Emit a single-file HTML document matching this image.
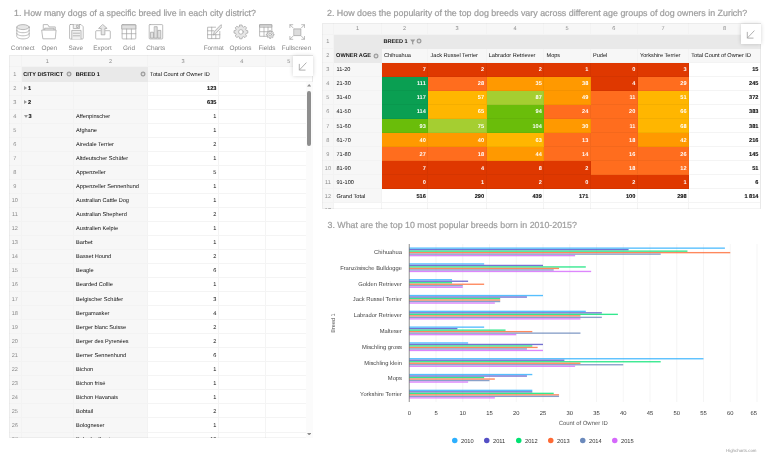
<!DOCTYPE html>
<html><head><meta charset="utf-8"><title>Dashboard</title>
<style>
html,body{margin:0;padding:0;background:#fff;}
body{filter:blur(0.3px);text-rendering:geometricPrecision;width:768px;height:456px;position:relative;overflow:hidden;font-family:"Liberation Sans",sans-serif;color:#111;}
.abs{position:absolute;}
.title{position:absolute;font-size:8.86px;color:#9e9e9e;-webkit-text-stroke:0.22px #9e9e9e;white-space:nowrap;line-height:10px;}
.tb{position:absolute;font-size:6.4px;color:#848484;white-space:nowrap;text-align:center;width:40px;line-height:8px;}
.grid{position:absolute;overflow:hidden;background:#fff;}
.grid:after{content:'';position:absolute;left:0;top:0;right:0;bottom:0;border:1px solid rgba(0,0,0,0.045);box-sizing:border-box;pointer-events:none;}
.c{position:absolute;box-sizing:border-box;font-size:5.6px;line-height:14.2px;height:14px;white-space:nowrap;overflow:hidden;border-right:0.5px solid #f4f4f4;border-bottom:0.5px solid #f4f4f4;padding:0.4px 2.1px 0 2.1px;color:#111;}
.h{background:#f7f7f7;color:#8c8c8c;text-align:center;border-color:#f3f3f3;}
.rn{background:#f7f7f7;color:#8c8c8c;text-align:center;padding:0.4px 0 0 0;border-color:#f3f3f3;}
.m{background:#f7f7f7;border-color:#f3f3f3;}
.hd{background:#e9e9e9;font-weight:bold;border-color:#e9e9e9;padding-left:1.7px;}
.r{text-align:right;padding-right:1.6px;}
.g2 .c{padding-top:0.55px;}
.b,.c b{font-weight:bold;-webkit-text-stroke:0.12px #111;}
.w{color:#fff;font-weight:bold;text-align:right;border-color:rgba(0,0,0,0.045);padding-right:1.600px;}
.btn{position:absolute;width:20px;height:20px;background:#fff;box-shadow:0 0 4px rgba(0,0,0,0.18);}
</style></head><body>

<div class="title" style="left:14px;top:7.5px;font-size:8.82px;">1. How many dogs of a specific breed live in each city district?</div>
<div class="title" style="left:327px;top:7.5px;font-size:8.88px;">2. How does the popularity of the top dog breeds vary across different age groups of dog owners in Zurich?</div>
<div class="title" style="left:327.5px;top:219.6px;font-size:8.83px;">3. What are the top 10 most popular breeds born in 2010-2015?</div>
<div class="tb" style="left:2.75px;top:44.9px;">Connect</div>
<div class="tb" style="left:29.25px;top:44.9px;">Open</div>
<div class="tb" style="left:55.75px;top:44.9px;">Save</div>
<div class="tb" style="left:82.5px;top:44.9px;">Export</div>
<div class="tb" style="left:109px;top:44.9px;">Grid</div>
<div class="tb" style="left:135.75px;top:44.9px;">Charts</div>
<div class="tb" style="left:193.75px;top:44.9px;">Format</div>
<div class="tb" style="left:220.5px;top:44.9px;">Options</div>
<div class="tb" style="left:247px;top:44.9px;">Fields</div>
<div class="tb" style="left:276.5px;top:44.9px;">Fullscreen</div>
<svg class="abs" style="left:14.75px;top:23.8px;" width="16" height="16" viewBox="0 0 16 16"><g fill="none" stroke="#a0a0a0" stroke-width="0.7" stroke-linejoin="round" stroke-linecap="round"><path d="M1.800 3.100v9.400c0 1.300 2.800 2.400 6.200 2.400s6.200-1.100 6.200-2.400V3.100"/><ellipse cx="8" cy="3.100" rx="6.200" ry="2.500" fill="#e6e6e6"/><path d="M1.800 6.300c0 1.300 2.800 2.400 6.200 2.400s6.200-1.100 6.200-2.400"/><path d="M1.800 9.400c0 1.300 2.800 2.400 6.200 2.400s6.200-1.100 6.200-2.400"/></g></svg>
<svg class="abs" style="left:41.25px;top:23.8px;" width="16" height="16" viewBox="0 0 16 16"><g fill="none" stroke="#a0a0a0" stroke-width="0.7" stroke-linejoin="round" stroke-linecap="round"><path d="M2.250 6.100V0.600h4.500l1.300 2.300h6.200v3.200"/><path d="M3.650 6V4.200h9.400V6" fill="#e6e6e6"/><path d="M1.050 6.100H15.100L14.250 14.800H2.250z" fill="#fff"/></g></svg>
<svg class="abs" style="left:67.75px;top:23.8px;" width="16" height="16" viewBox="0 0 16 16"><g fill="none" stroke="#a0a0a0" stroke-width="0.7" stroke-linejoin="round" stroke-linecap="round" transform="translate(0.4 0)"><path d="M2 0.500h10.600l2.200 2.200v11.500a.8.800 0 0 1-.8.800H2a.8.800 0 0 1-.8-.8V1.300a.8.800 0 0 1 .8-.8z"/><path d="M4.850 0.500v4h6.300v-4" fill="#f0f0f0"/><path d="M8.600 1.200h1.300v2.300H8.600z"/><path d="M3.350 14.950V6.400h9.300v8.550" fill="#f0f0f0"/><path d="M4.800 9.200h6.400M4.800 11.800h6.400"/></g></svg>
<svg class="abs" style="left:94.5px;top:23.8px;" width="16" height="16" viewBox="0 0 16 16"><g fill="none" stroke="#a0a0a0" stroke-width="0.7" stroke-linejoin="round" stroke-linecap="round"><path d="M5.400 6.700H1.500a.8.800 0 0 0-.8.800v6.700a.8.800 0 0 0 .8.800h13a.8.800 0 0 0 .8-.8V7.500a.8.800 0 0 0-.8-.8h-3.900"/><path d="M8 0.700l4.100 3.700H9.900v6.400H6.200V4.400H4z" fill="#e6e6e6"/></g></svg>
<svg class="abs" style="left:121px;top:23.8px;" width="16" height="16" viewBox="0 0 16 16"><g fill="none" stroke="#a0a0a0" stroke-width="0.7" stroke-linejoin="round" stroke-linecap="round"><rect x="1.100" y="0.600" width="13.700" height="14.350" rx="0.800"/><path d="M1.100 0.900h13.700v4.150H1.100z" fill="#e0e0e0"/><path d="M1.100 9.700h13.700M5.600 5.050v9.900M10.400 5.050v9.900"/></g></svg>
<svg class="abs" style="left:147.75px;top:23.8px;" width="16" height="16" viewBox="0 0 16 16"><g fill="none" stroke="#a0a0a0" stroke-width="0.7" stroke-linejoin="round" stroke-linecap="round"><rect x="1.200" y="0.600" width="13.500" height="14.350" rx="0.800"/><rect x="2.900" y="8.200" width="2.600" height="5.900" fill="#e0e0e0"/><rect x="6.600" y="2.700" width="2.600" height="11.400" fill="#e0e0e0"/><rect x="10.200" y="6.400" width="2.600" height="7.700" fill="#e0e0e0"/></g></svg>
<svg class="abs" style="left:205.75px;top:23.8px;" width="16" height="16" viewBox="0 0 16 16"><g fill="none" stroke="#a0a0a0" stroke-width="0.7" stroke-linejoin="round" stroke-linecap="round"><path d="M9.600 3.200H1.600v11.400h12.200V7.400"/><path d="M1.600 6.800h6.200M1.600 10.700h12.200M5.700 3.200v11.400M9.800 10.700v3.900"/><path d="M7.500 10.700l.7-3 6.200-6.500a1.100 1.100 0 0 1 1.600 1.500l-6.100 6.600z" fill="#e6e6e6"/></g></svg>
<svg class="abs" style="left:232.5px;top:23.8px;" width="16" height="16" viewBox="0 0 16 16"><g fill="none" stroke="#a0a0a0" stroke-width="0.7" stroke-linejoin="round" stroke-linecap="round"><path d="M6.71 1.00L9.09 1.00L9.32 2.59L10.65 3.14L11.94 2.18L13.62 3.86L12.66 5.15L13.21 6.48L14.80 6.71L14.80 9.09L13.21 9.32L12.66 10.65L13.62 11.94L11.94 13.62L10.65 12.66L9.32 13.21L9.09 14.80L6.71 14.80L6.48 13.21L5.15 12.66L3.86 13.62L2.18 11.94L3.14 10.65L2.59 9.32L1.00 9.09L1.00 6.71L2.59 6.48L3.14 5.15L2.18 3.86L3.86 2.18L5.15 3.14L6.48 2.59z" fill="#e6e6e6"/><circle cx="7.900" cy="7.900" r="2.300" fill="#fff"/></g></svg>
<svg class="abs" style="left:259px;top:23.8px;" width="16" height="16" viewBox="0 0 16 16"><g fill="none" stroke="#a0a0a0" stroke-width="0.7" stroke-linejoin="round" stroke-linecap="round"><path d="M1 0.600h11.800v11.700H1z"/><path d="M1 0.900h11.800v2.300H1z" fill="#e0e0e0"/><path d="M1 7.700h11.800M5 3.200v9.100M9 3.200v9.100"/><path d="M10.63 6.74L11.77 6.74L11.85 7.77L12.74 8.14L13.52 7.47L14.33 8.28L13.66 9.06L14.03 9.95L15.06 10.03L15.06 11.17L14.03 11.25L13.66 12.14L14.33 12.92L13.52 13.73L12.74 13.06L11.85 13.43L11.77 14.46L10.63 14.46L10.55 13.43L9.66 13.06L8.88 13.73L8.07 12.92L8.74 12.14L8.37 11.25L7.34 11.17L7.34 10.03L8.37 9.95L8.74 9.06L8.07 8.28L8.88 7.47L9.66 8.14L10.55 7.77z" fill="#e6e6e6"/><circle cx="11.200" cy="10.600" r="1.250" fill="#fff"/></g></svg>
<svg class="abs" style="left:288.5px;top:23.8px;" width="16" height="16" viewBox="0 0 16 16"><g fill="none" stroke="#a0a0a0" stroke-width="0.7" stroke-linejoin="round" stroke-linecap="round"><rect x="5.150" y="4.900" width="6.700" height="6.700" fill="#dcdcdc"/><path d="M1 0.800l3.200 3.200M15.500 0.800l-3.200 3.200M1 15.200l3.200-3.200M15.500 15.200l-3.200-3.200"/><path d="M0.900 3.600V0.700h2.900M12.700 0.700h2.900v2.900M0.900 12.400v2.900h2.900M12.700 15.300h2.900v-2.900"/></g></svg>
<div class="grid" style="left:9.25px;top:55.3px;width:303.75px;height:383.2px;">
<div class="c rn" style="left:0.00px;top:0.00px;width:12.25px;height:12.20px;line-height:12.40px;"></div>
<div class="c h" style="left:12.25px;top:0.00px;width:52.50px;height:12.20px;line-height:12.40px;">1</div>
<div class="c h" style="left:64.75px;top:0.00px;width:74.00px;height:12.20px;line-height:12.40px;">2</div>
<div class="c h" style="left:138.75px;top:0.00px;width:71.00px;height:12.20px;line-height:12.40px;">3</div>
<div class="c h" style="left:209.75px;top:0.00px;width:46.50px;height:12.20px;line-height:12.40px;">4</div>
<div class="c h" style="left:256.25px;top:0.00px;width:47.50px;height:12.20px;line-height:12.40px;">5</div>
<div class="c rn" style="left:0.00px;top:12.20px;width:12.25px;height:14.04px;line-height:14.24px;">1</div>
<div class="c hd" style="left:12.25px;top:12.20px;width:52.50px;height:14.04px;line-height:14.24px;"><span>CITY DISTRICT</span><span style="position:absolute;right:0.700px;top:0.500px"><svg width="6.100" height="6.100" viewBox="0 0 16 16" style="vertical-align:-1px"><path d="M6.73 0.91L9.27 0.91L9.39 2.99L10.56 3.47L12.12 2.09L13.91 3.88L12.53 5.44L13.01 6.61L15.09 6.73L15.09 9.27L13.01 9.39L12.53 10.56L13.91 12.12L12.12 13.91L10.56 12.53L9.39 13.01L9.27 15.09L6.73 15.09L6.61 13.01L5.44 12.53L3.88 13.91L2.09 12.12L3.47 10.56L2.99 9.39L0.91 9.27L0.91 6.73L2.99 6.61L3.47 5.44L2.09 3.88L3.88 2.09L5.44 3.47L6.61 2.99zM8 5.100a2.900 2.900 0 1 0 0.010 0z" fill="#9c9c9c" fill-rule="evenodd"/></svg></span></div>
<div class="c hd" style="left:64.75px;top:12.20px;width:74.00px;height:14.04px;line-height:14.24px;"><span>BREED 1</span><span style="position:absolute;right:0.700px;top:0.500px"><svg width="6.100" height="6.100" viewBox="0 0 16 16" style="vertical-align:-1px"><path d="M6.73 0.91L9.27 0.91L9.39 2.99L10.56 3.47L12.12 2.09L13.91 3.88L12.53 5.44L13.01 6.61L15.09 6.73L15.09 9.27L13.01 9.39L12.53 10.56L13.91 12.12L12.12 13.91L10.56 12.53L9.39 13.01L9.27 15.09L6.73 15.09L6.61 13.01L5.44 12.53L3.88 13.91L2.09 12.12L3.47 10.56L2.99 9.39L0.91 9.27L0.91 6.73L2.99 6.61L3.47 5.44L2.09 3.88L3.88 2.09L5.44 3.47L6.61 2.99zM8 5.100a2.900 2.900 0 1 0 0.010 0z" fill="#9c9c9c" fill-rule="evenodd"/></svg></span></div>
<div class="c m" style="left:138.75px;top:12.20px;width:71.00px;height:14.04px;line-height:14.24px;background:#f7f7f7;">Total Count of Owner ID</div>
<div class="c " style="left:209.75px;top:12.20px;width:46.50px;height:14.04px;line-height:14.24px;"></div>
<div class="c " style="left:256.25px;top:12.20px;width:47.50px;height:14.04px;line-height:14.24px;"></div>
<div class="c rn" style="left:0.00px;top:26.24px;width:12.25px;height:14.04px;line-height:14.24px;">2</div>
<div class="c m" style="left:12.25px;top:26.24px;width:52.50px;height:14.04px;line-height:14.24px;"><svg width="3" height="4" viewBox="0 0 3 4" style="vertical-align:0px;margin-right:1.5px"><path d="M0 0l3 2-3 2z" fill="#999"/></svg><b>1</b></div>
<div class="c m" style="left:64.75px;top:26.24px;width:74.00px;height:14.04px;line-height:14.24px;"></div>
<div class="c r" style="left:138.75px;top:26.24px;width:71.00px;height:14.04px;line-height:14.24px;"><b>123</b></div>
<div class="c " style="left:209.75px;top:26.24px;width:46.50px;height:14.04px;line-height:14.24px;"></div>
<div class="c " style="left:256.25px;top:26.24px;width:47.50px;height:14.04px;line-height:14.24px;"></div>
<div class="c rn" style="left:0.00px;top:40.28px;width:12.25px;height:14.04px;line-height:14.24px;">3</div>
<div class="c m" style="left:12.25px;top:40.28px;width:52.50px;height:14.04px;line-height:14.24px;"><svg width="3" height="4" viewBox="0 0 3 4" style="vertical-align:0px;margin-right:1.5px"><path d="M0 0l3 2-3 2z" fill="#999"/></svg><b>2</b></div>
<div class="c m" style="left:64.75px;top:40.28px;width:74.00px;height:14.04px;line-height:14.24px;"></div>
<div class="c r" style="left:138.75px;top:40.28px;width:71.00px;height:14.04px;line-height:14.24px;"><b>635</b></div>
<div class="c " style="left:209.75px;top:40.28px;width:46.50px;height:14.04px;line-height:14.24px;"></div>
<div class="c " style="left:256.25px;top:40.28px;width:47.50px;height:14.04px;line-height:14.24px;"></div>
<div class="c rn" style="left:0.00px;top:54.32px;width:12.25px;height:14.04px;line-height:14.24px;">4</div>
<div class="c m" style="left:12.25px;top:54.32px;width:52.50px;height:14.04px;line-height:14.24px;"><svg width="4" height="3" viewBox="0 0 4 3" style="vertical-align:0.5px;margin-right:1px"><path d="M0 0h4l-2 3z" fill="#999"/></svg><b>3</b></div>
<div class="c m" style="left:64.75px;top:54.32px;width:74.00px;height:14.04px;line-height:14.24px;">Affenpinscher</div>
<div class="c r" style="left:138.75px;top:54.32px;width:71.00px;height:14.04px;line-height:14.24px;">1</div>
<div class="c " style="left:209.75px;top:54.32px;width:46.50px;height:14.04px;line-height:14.24px;"></div>
<div class="c " style="left:256.25px;top:54.32px;width:47.50px;height:14.04px;line-height:14.24px;"></div>
<div class="c rn" style="left:0.00px;top:68.36px;width:12.25px;height:14.04px;line-height:14.24px;">5</div>
<div class="c m" style="left:12.25px;top:68.36px;width:52.50px;height:14.04px;line-height:14.24px;"></div>
<div class="c m" style="left:64.75px;top:68.36px;width:74.00px;height:14.04px;line-height:14.24px;">Afghane</div>
<div class="c r" style="left:138.75px;top:68.36px;width:71.00px;height:14.04px;line-height:14.24px;">1</div>
<div class="c " style="left:209.75px;top:68.36px;width:46.50px;height:14.04px;line-height:14.24px;"></div>
<div class="c " style="left:256.25px;top:68.36px;width:47.50px;height:14.04px;line-height:14.24px;"></div>
<div class="c rn" style="left:0.00px;top:82.40px;width:12.25px;height:14.04px;line-height:14.24px;">6</div>
<div class="c m" style="left:12.25px;top:82.40px;width:52.50px;height:14.04px;line-height:14.24px;"></div>
<div class="c m" style="left:64.75px;top:82.40px;width:74.00px;height:14.04px;line-height:14.24px;">Airedale Terrier</div>
<div class="c r" style="left:138.75px;top:82.40px;width:71.00px;height:14.04px;line-height:14.24px;">2</div>
<div class="c " style="left:209.75px;top:82.40px;width:46.50px;height:14.04px;line-height:14.24px;"></div>
<div class="c " style="left:256.25px;top:82.40px;width:47.50px;height:14.04px;line-height:14.24px;"></div>
<div class="c rn" style="left:0.00px;top:96.44px;width:12.25px;height:14.04px;line-height:14.24px;">7</div>
<div class="c m" style="left:12.25px;top:96.44px;width:52.50px;height:14.04px;line-height:14.24px;"></div>
<div class="c m" style="left:64.75px;top:96.44px;width:74.00px;height:14.04px;line-height:14.24px;">Altdeutscher Schäfer</div>
<div class="c r" style="left:138.75px;top:96.44px;width:71.00px;height:14.04px;line-height:14.24px;">1</div>
<div class="c " style="left:209.75px;top:96.44px;width:46.50px;height:14.04px;line-height:14.24px;"></div>
<div class="c " style="left:256.25px;top:96.44px;width:47.50px;height:14.04px;line-height:14.24px;"></div>
<div class="c rn" style="left:0.00px;top:110.48px;width:12.25px;height:14.04px;line-height:14.24px;">8</div>
<div class="c m" style="left:12.25px;top:110.48px;width:52.50px;height:14.04px;line-height:14.24px;"></div>
<div class="c m" style="left:64.75px;top:110.48px;width:74.00px;height:14.04px;line-height:14.24px;">Appenzeller</div>
<div class="c r" style="left:138.75px;top:110.48px;width:71.00px;height:14.04px;line-height:14.24px;">5</div>
<div class="c " style="left:209.75px;top:110.48px;width:46.50px;height:14.04px;line-height:14.24px;"></div>
<div class="c " style="left:256.25px;top:110.48px;width:47.50px;height:14.04px;line-height:14.24px;"></div>
<div class="c rn" style="left:0.00px;top:124.52px;width:12.25px;height:14.04px;line-height:14.24px;">9</div>
<div class="c m" style="left:12.25px;top:124.52px;width:52.50px;height:14.04px;line-height:14.24px;"></div>
<div class="c m" style="left:64.75px;top:124.52px;width:74.00px;height:14.04px;line-height:14.24px;">Appenzeller Sennenhund</div>
<div class="c r" style="left:138.75px;top:124.52px;width:71.00px;height:14.04px;line-height:14.24px;">1</div>
<div class="c " style="left:209.75px;top:124.52px;width:46.50px;height:14.04px;line-height:14.24px;"></div>
<div class="c " style="left:256.25px;top:124.52px;width:47.50px;height:14.04px;line-height:14.24px;"></div>
<div class="c rn" style="left:0.00px;top:138.56px;width:12.25px;height:14.04px;line-height:14.24px;">10</div>
<div class="c m" style="left:12.25px;top:138.56px;width:52.50px;height:14.04px;line-height:14.24px;"></div>
<div class="c m" style="left:64.75px;top:138.56px;width:74.00px;height:14.04px;line-height:14.24px;">Australian Cattle Dog</div>
<div class="c r" style="left:138.75px;top:138.56px;width:71.00px;height:14.04px;line-height:14.24px;">1</div>
<div class="c " style="left:209.75px;top:138.56px;width:46.50px;height:14.04px;line-height:14.24px;"></div>
<div class="c " style="left:256.25px;top:138.56px;width:47.50px;height:14.04px;line-height:14.24px;"></div>
<div class="c rn" style="left:0.00px;top:152.60px;width:12.25px;height:14.04px;line-height:14.24px;">11</div>
<div class="c m" style="left:12.25px;top:152.60px;width:52.50px;height:14.04px;line-height:14.24px;"></div>
<div class="c m" style="left:64.75px;top:152.60px;width:74.00px;height:14.04px;line-height:14.24px;">Australian Shepherd</div>
<div class="c r" style="left:138.75px;top:152.60px;width:71.00px;height:14.04px;line-height:14.24px;">2</div>
<div class="c " style="left:209.75px;top:152.60px;width:46.50px;height:14.04px;line-height:14.24px;"></div>
<div class="c " style="left:256.25px;top:152.60px;width:47.50px;height:14.04px;line-height:14.24px;"></div>
<div class="c rn" style="left:0.00px;top:166.64px;width:12.25px;height:14.04px;line-height:14.24px;">12</div>
<div class="c m" style="left:12.25px;top:166.64px;width:52.50px;height:14.04px;line-height:14.24px;"></div>
<div class="c m" style="left:64.75px;top:166.64px;width:74.00px;height:14.04px;line-height:14.24px;">Australien Kelpie</div>
<div class="c r" style="left:138.75px;top:166.64px;width:71.00px;height:14.04px;line-height:14.24px;">1</div>
<div class="c " style="left:209.75px;top:166.64px;width:46.50px;height:14.04px;line-height:14.24px;"></div>
<div class="c " style="left:256.25px;top:166.64px;width:47.50px;height:14.04px;line-height:14.24px;"></div>
<div class="c rn" style="left:0.00px;top:180.68px;width:12.25px;height:14.04px;line-height:14.24px;">13</div>
<div class="c m" style="left:12.25px;top:180.68px;width:52.50px;height:14.04px;line-height:14.24px;"></div>
<div class="c m" style="left:64.75px;top:180.68px;width:74.00px;height:14.04px;line-height:14.24px;">Barbet</div>
<div class="c r" style="left:138.75px;top:180.68px;width:71.00px;height:14.04px;line-height:14.24px;">1</div>
<div class="c " style="left:209.75px;top:180.68px;width:46.50px;height:14.04px;line-height:14.24px;"></div>
<div class="c " style="left:256.25px;top:180.68px;width:47.50px;height:14.04px;line-height:14.24px;"></div>
<div class="c rn" style="left:0.00px;top:194.72px;width:12.25px;height:14.04px;line-height:14.24px;">14</div>
<div class="c m" style="left:12.25px;top:194.72px;width:52.50px;height:14.04px;line-height:14.24px;"></div>
<div class="c m" style="left:64.75px;top:194.72px;width:74.00px;height:14.04px;line-height:14.24px;">Basset Hound</div>
<div class="c r" style="left:138.75px;top:194.72px;width:71.00px;height:14.04px;line-height:14.24px;">2</div>
<div class="c " style="left:209.75px;top:194.72px;width:46.50px;height:14.04px;line-height:14.24px;"></div>
<div class="c " style="left:256.25px;top:194.72px;width:47.50px;height:14.04px;line-height:14.24px;"></div>
<div class="c rn" style="left:0.00px;top:208.76px;width:12.25px;height:14.04px;line-height:14.24px;">15</div>
<div class="c m" style="left:12.25px;top:208.76px;width:52.50px;height:14.04px;line-height:14.24px;"></div>
<div class="c m" style="left:64.75px;top:208.76px;width:74.00px;height:14.04px;line-height:14.24px;">Beagle</div>
<div class="c r" style="left:138.75px;top:208.76px;width:71.00px;height:14.04px;line-height:14.24px;">6</div>
<div class="c " style="left:209.75px;top:208.76px;width:46.50px;height:14.04px;line-height:14.24px;"></div>
<div class="c " style="left:256.25px;top:208.76px;width:47.50px;height:14.04px;line-height:14.24px;"></div>
<div class="c rn" style="left:0.00px;top:222.80px;width:12.25px;height:14.04px;line-height:14.24px;">16</div>
<div class="c m" style="left:12.25px;top:222.80px;width:52.50px;height:14.04px;line-height:14.24px;"></div>
<div class="c m" style="left:64.75px;top:222.80px;width:74.00px;height:14.04px;line-height:14.24px;">Bearded Collie</div>
<div class="c r" style="left:138.75px;top:222.80px;width:71.00px;height:14.04px;line-height:14.24px;">1</div>
<div class="c " style="left:209.75px;top:222.80px;width:46.50px;height:14.04px;line-height:14.24px;"></div>
<div class="c " style="left:256.25px;top:222.80px;width:47.50px;height:14.04px;line-height:14.24px;"></div>
<div class="c rn" style="left:0.00px;top:236.84px;width:12.25px;height:14.04px;line-height:14.24px;">17</div>
<div class="c m" style="left:12.25px;top:236.84px;width:52.50px;height:14.04px;line-height:14.24px;"></div>
<div class="c m" style="left:64.75px;top:236.84px;width:74.00px;height:14.04px;line-height:14.24px;">Belgischer Schäfer</div>
<div class="c r" style="left:138.75px;top:236.84px;width:71.00px;height:14.04px;line-height:14.24px;">3</div>
<div class="c " style="left:209.75px;top:236.84px;width:46.50px;height:14.04px;line-height:14.24px;"></div>
<div class="c " style="left:256.25px;top:236.84px;width:47.50px;height:14.04px;line-height:14.24px;"></div>
<div class="c rn" style="left:0.00px;top:250.88px;width:12.25px;height:14.04px;line-height:14.24px;">18</div>
<div class="c m" style="left:12.25px;top:250.88px;width:52.50px;height:14.04px;line-height:14.24px;"></div>
<div class="c m" style="left:64.75px;top:250.88px;width:74.00px;height:14.04px;line-height:14.24px;">Bergamasker</div>
<div class="c r" style="left:138.75px;top:250.88px;width:71.00px;height:14.04px;line-height:14.24px;">4</div>
<div class="c " style="left:209.75px;top:250.88px;width:46.50px;height:14.04px;line-height:14.24px;"></div>
<div class="c " style="left:256.25px;top:250.88px;width:47.50px;height:14.04px;line-height:14.24px;"></div>
<div class="c rn" style="left:0.00px;top:264.92px;width:12.25px;height:14.04px;line-height:14.24px;">19</div>
<div class="c m" style="left:12.25px;top:264.92px;width:52.50px;height:14.04px;line-height:14.24px;"></div>
<div class="c m" style="left:64.75px;top:264.92px;width:74.00px;height:14.04px;line-height:14.24px;">Berger blanc Suisse</div>
<div class="c r" style="left:138.75px;top:264.92px;width:71.00px;height:14.04px;line-height:14.24px;">2</div>
<div class="c " style="left:209.75px;top:264.92px;width:46.50px;height:14.04px;line-height:14.24px;"></div>
<div class="c " style="left:256.25px;top:264.92px;width:47.50px;height:14.04px;line-height:14.24px;"></div>
<div class="c rn" style="left:0.00px;top:278.96px;width:12.25px;height:14.04px;line-height:14.24px;">20</div>
<div class="c m" style="left:12.25px;top:278.96px;width:52.50px;height:14.04px;line-height:14.24px;"></div>
<div class="c m" style="left:64.75px;top:278.96px;width:74.00px;height:14.04px;line-height:14.24px;">Berger des Pyrenées</div>
<div class="c r" style="left:138.75px;top:278.96px;width:71.00px;height:14.04px;line-height:14.24px;">2</div>
<div class="c " style="left:209.75px;top:278.96px;width:46.50px;height:14.04px;line-height:14.24px;"></div>
<div class="c " style="left:256.25px;top:278.96px;width:47.50px;height:14.04px;line-height:14.24px;"></div>
<div class="c rn" style="left:0.00px;top:293.00px;width:12.25px;height:14.04px;line-height:14.24px;">21</div>
<div class="c m" style="left:12.25px;top:293.00px;width:52.50px;height:14.04px;line-height:14.24px;"></div>
<div class="c m" style="left:64.75px;top:293.00px;width:74.00px;height:14.04px;line-height:14.24px;">Berner Sennenhund</div>
<div class="c r" style="left:138.75px;top:293.00px;width:71.00px;height:14.04px;line-height:14.24px;">6</div>
<div class="c " style="left:209.75px;top:293.00px;width:46.50px;height:14.04px;line-height:14.24px;"></div>
<div class="c " style="left:256.25px;top:293.00px;width:47.50px;height:14.04px;line-height:14.24px;"></div>
<div class="c rn" style="left:0.00px;top:307.04px;width:12.25px;height:14.04px;line-height:14.24px;">22</div>
<div class="c m" style="left:12.25px;top:307.04px;width:52.50px;height:14.04px;line-height:14.24px;"></div>
<div class="c m" style="left:64.75px;top:307.04px;width:74.00px;height:14.04px;line-height:14.24px;">Bichon</div>
<div class="c r" style="left:138.75px;top:307.04px;width:71.00px;height:14.04px;line-height:14.24px;">1</div>
<div class="c " style="left:209.75px;top:307.04px;width:46.50px;height:14.04px;line-height:14.24px;"></div>
<div class="c " style="left:256.25px;top:307.04px;width:47.50px;height:14.04px;line-height:14.24px;"></div>
<div class="c rn" style="left:0.00px;top:321.08px;width:12.25px;height:14.04px;line-height:14.24px;">23</div>
<div class="c m" style="left:12.25px;top:321.08px;width:52.50px;height:14.04px;line-height:14.24px;"></div>
<div class="c m" style="left:64.75px;top:321.08px;width:74.00px;height:14.04px;line-height:14.24px;">Bichon frisé</div>
<div class="c r" style="left:138.75px;top:321.08px;width:71.00px;height:14.04px;line-height:14.24px;">1</div>
<div class="c " style="left:209.75px;top:321.08px;width:46.50px;height:14.04px;line-height:14.24px;"></div>
<div class="c " style="left:256.25px;top:321.08px;width:47.50px;height:14.04px;line-height:14.24px;"></div>
<div class="c rn" style="left:0.00px;top:335.12px;width:12.25px;height:14.04px;line-height:14.24px;">24</div>
<div class="c m" style="left:12.25px;top:335.12px;width:52.50px;height:14.04px;line-height:14.24px;"></div>
<div class="c m" style="left:64.75px;top:335.12px;width:74.00px;height:14.04px;line-height:14.24px;">Bichon Havanais</div>
<div class="c r" style="left:138.75px;top:335.12px;width:71.00px;height:14.04px;line-height:14.24px;">1</div>
<div class="c " style="left:209.75px;top:335.12px;width:46.50px;height:14.04px;line-height:14.24px;"></div>
<div class="c " style="left:256.25px;top:335.12px;width:47.50px;height:14.04px;line-height:14.24px;"></div>
<div class="c rn" style="left:0.00px;top:349.16px;width:12.25px;height:14.04px;line-height:14.24px;">25</div>
<div class="c m" style="left:12.25px;top:349.16px;width:52.50px;height:14.04px;line-height:14.24px;"></div>
<div class="c m" style="left:64.75px;top:349.16px;width:74.00px;height:14.04px;line-height:14.24px;">Bobtail</div>
<div class="c r" style="left:138.75px;top:349.16px;width:71.00px;height:14.04px;line-height:14.24px;">2</div>
<div class="c " style="left:209.75px;top:349.16px;width:46.50px;height:14.04px;line-height:14.24px;"></div>
<div class="c " style="left:256.25px;top:349.16px;width:47.50px;height:14.04px;line-height:14.24px;"></div>
<div class="c rn" style="left:0.00px;top:363.20px;width:12.25px;height:14.04px;line-height:14.24px;">26</div>
<div class="c m" style="left:12.25px;top:363.20px;width:52.50px;height:14.04px;line-height:14.24px;"></div>
<div class="c m" style="left:64.75px;top:363.20px;width:74.00px;height:14.04px;line-height:14.24px;">Bologneser</div>
<div class="c r" style="left:138.75px;top:363.20px;width:71.00px;height:14.04px;line-height:14.24px;">1</div>
<div class="c " style="left:209.75px;top:363.20px;width:46.50px;height:14.04px;line-height:14.24px;"></div>
<div class="c " style="left:256.25px;top:363.20px;width:47.50px;height:14.04px;line-height:14.24px;"></div>
<div class="c rn" style="left:0.00px;top:377.24px;width:12.25px;height:14.04px;line-height:14.24px;">27</div>
<div class="c m" style="left:12.25px;top:377.24px;width:52.50px;height:14.04px;line-height:14.24px;"></div>
<div class="c m" style="left:64.75px;top:377.24px;width:74.00px;height:14.04px;line-height:14.24px;">Bolonka Zwetna</div>
<div class="c r" style="left:138.75px;top:377.24px;width:71.00px;height:14.04px;line-height:14.24px;">12</div>
<div class="c " style="left:209.75px;top:377.24px;width:46.50px;height:14.04px;line-height:14.24px;"></div>
<div class="c " style="left:256.25px;top:377.24px;width:47.50px;height:14.04px;line-height:14.24px;"></div>
</div>
<div class="abs" style="left:306px;top:81.8px;width:7px;height:356.700px;background:#fbfbfb;"></div>
<div class="abs" style="left:307.400px;top:90.500px;width:3.800px;height:55.700px;border-radius:1.900px;background:#8e8e8e;"></div>
<svg class="abs" style="left:307.100px;top:84.400px" width="4.400" height="2.600" viewBox="0 0 5 3"><path d="M0 3h5L2.500 0z" fill="#8e8e8e"/></svg>
<svg class="abs" style="left:307.100px;top:432.600px" width="4.400" height="2.600" viewBox="0 0 5 3"><path d="M0 0h5L2.500 3z" fill="#8e8e8e"/></svg>
<div class="btn" style="left:293px;top:56px;"><svg width="20" height="20" viewBox="0 0 20 20"><path d="M13.400 6.600L6.300 14.100M6.300 7.900V14.100H12.500" fill="none" stroke="#a2a2a2" stroke-width="0.85"/></svg></div>
<div class="grid g2" style="left:322.4px;top:23.1px;width:438.6px;height:186.4px;">
<div class="c rn" style="left:0.00px;top:0.00px;width:12.00px;height:11.70px;line-height:11.90px;"></div>
<div class="c h" style="left:12.00px;top:0.00px;width:47.40px;height:11.70px;line-height:11.90px;padding-top:1.4px;">1</div>
<div class="c h" style="left:59.40px;top:0.00px;width:46.60px;height:11.70px;line-height:11.90px;padding-top:1.4px;">2</div>
<div class="c h" style="left:106.00px;top:0.00px;width:58.25px;height:11.70px;line-height:11.90px;padding-top:1.4px;">3</div>
<div class="c h" style="left:164.25px;top:0.00px;width:57.75px;height:11.70px;line-height:11.90px;padding-top:1.4px;">4</div>
<div class="c h" style="left:222.00px;top:0.00px;width:46.50px;height:11.70px;line-height:11.90px;padding-top:1.4px;">5</div>
<div class="c h" style="left:268.50px;top:0.00px;width:47.00px;height:11.70px;line-height:11.90px;padding-top:1.4px;">6</div>
<div class="c h" style="left:315.50px;top:0.00px;width:51.25px;height:11.70px;line-height:11.90px;padding-top:1.4px;">7</div>
<div class="c h" style="left:366.75px;top:0.00px;width:71.85px;height:11.70px;line-height:11.90px;padding-top:1.4px;">8</div>
<div class="c rn" style="left:0.00px;top:11.70px;width:12.00px;height:14.03px;line-height:14.23px;">1</div>
<div class="c hd" style="left:12px;top:11.7px;width:47.4px;"></div>
<div class="c hd" style="left:59.4px;top:11.7px;width:379.20000000000005px;line-height:14.2px;"><span>BREED 1</span><svg width="5.400" height="6" viewBox="0 0 10 11" style="vertical-align:-2px;margin-left:2.600px"><path d="M.3.800h9.400L6.100 5.400v5L3.900 9V5.400z" fill="#9a9a9a"/></svg><svg width="6.100" height="6.100" viewBox="0 0 16 16" style="vertical-align:-0.800px;margin-left:0.300px"><path d="M6.73 0.91L9.27 0.91L9.39 2.99L10.56 3.47L12.12 2.09L13.91 3.88L12.53 5.44L13.01 6.61L15.09 6.73L15.09 9.27L13.01 9.39L12.53 10.56L13.91 12.12L12.12 13.91L10.56 12.53L9.39 13.01L9.27 15.09L6.73 15.09L6.61 13.01L5.44 12.53L3.88 13.91L2.09 12.12L3.47 10.56L2.99 9.39L0.91 9.27L0.91 6.73L2.99 6.61L3.47 5.44L2.09 3.88L3.88 2.09L5.44 3.47L6.61 2.99zM8 5.100a2.900 2.900 0 1 0 0.010 0z" fill="#9c9c9c" fill-rule="evenodd"/></svg></div>
<div class="c rn" style="left:0.00px;top:25.73px;width:12.00px;height:14.03px;line-height:14.23px;">2</div>
<div class="c hd" style="left:12.00px;top:25.73px;width:47.40px;height:14.03px;line-height:14.23px;"><span>OWNER AGE</span><svg width="6.100" height="6.100" viewBox="0 0 16 16" style="vertical-align:-1.400px;margin-left:1.800px"><path d="M6.73 0.91L9.27 0.91L9.39 2.99L10.56 3.47L12.12 2.09L13.91 3.88L12.53 5.44L13.01 6.61L15.09 6.73L15.09 9.27L13.01 9.39L12.53 10.56L13.91 12.12L12.12 13.91L10.56 12.53L9.39 13.01L9.27 15.09L6.73 15.09L6.61 13.01L5.44 12.53L3.88 13.91L2.09 12.12L3.47 10.56L2.99 9.39L0.91 9.27L0.91 6.73L2.99 6.61L3.47 5.44L2.09 3.88L3.88 2.09L5.44 3.47L6.61 2.99zM8 5.100a2.900 2.900 0 1 0 0.010 0z" fill="#9c9c9c" fill-rule="evenodd"/></svg></div>
<div class="c m" style="left:59.40px;top:25.73px;width:46.60px;height:14.03px;line-height:14.23px;">Chihuahua</div>
<div class="c m" style="left:106.00px;top:25.73px;width:58.25px;height:14.03px;line-height:14.23px;">Jack Russel Terrier</div>
<div class="c m" style="left:164.25px;top:25.73px;width:57.75px;height:14.03px;line-height:14.23px;">Labrador Retriever</div>
<div class="c m" style="left:222.00px;top:25.73px;width:46.50px;height:14.03px;line-height:14.23px;">Mops</div>
<div class="c m" style="left:268.50px;top:25.73px;width:47.00px;height:14.03px;line-height:14.23px;">Pudel</div>
<div class="c m" style="left:315.50px;top:25.73px;width:51.25px;height:14.03px;line-height:14.23px;">Yorkshire Terrier</div>
<div class="c m" style="left:366.75px;top:25.73px;width:71.85px;height:14.03px;line-height:14.23px;">Total Count of Owner ID</div>
<div class="c rn" style="left:0.00px;top:39.76px;width:12.00px;height:14.03px;line-height:14.23px;">3</div>
<div class="c m" style="left:12.00px;top:39.76px;width:47.40px;height:14.03px;line-height:14.23px;">11-20</div>
<div class="c w" style="left:59.40px;top:39.76px;width:46.60px;height:14.03px;line-height:14.23px;background:#DF3800;">7</div>
<div class="c w" style="left:106.00px;top:39.76px;width:58.25px;height:14.03px;line-height:14.23px;background:#DF3800;">2</div>
<div class="c w" style="left:164.25px;top:39.76px;width:57.75px;height:14.03px;line-height:14.23px;background:#DF3800;">2</div>
<div class="c w" style="left:222.00px;top:39.76px;width:46.50px;height:14.03px;line-height:14.23px;background:#DF3800;">1</div>
<div class="c w" style="left:268.50px;top:39.76px;width:47.00px;height:14.03px;line-height:14.23px;background:#DF3800;">0</div>
<div class="c w" style="left:315.50px;top:39.76px;width:51.25px;height:14.03px;line-height:14.23px;background:#DF3800;">3</div>
<div class="c r b" style="left:366.75px;top:39.76px;width:71.85px;height:14.03px;line-height:14.23px;">15</div>
<div class="c rn" style="left:0.00px;top:53.79px;width:12.00px;height:14.03px;line-height:14.23px;">4</div>
<div class="c m" style="left:12.00px;top:53.79px;width:47.40px;height:14.03px;line-height:14.23px;">21-30</div>
<div class="c w" style="left:59.40px;top:53.79px;width:46.60px;height:14.03px;line-height:14.23px;background:#0A9F52;">111</div>
<div class="c w" style="left:106.00px;top:53.79px;width:58.25px;height:14.03px;line-height:14.23px;background:#FF6D1E;">28</div>
<div class="c w" style="left:164.25px;top:53.79px;width:57.75px;height:14.03px;line-height:14.23px;background:#FF9900;">35</div>
<div class="c w" style="left:222.00px;top:53.79px;width:46.50px;height:14.03px;line-height:14.23px;background:#FF9900;">38</div>
<div class="c w" style="left:268.50px;top:53.79px;width:47.00px;height:14.03px;line-height:14.23px;background:#DF3800;">4</div>
<div class="c w" style="left:315.50px;top:53.79px;width:51.25px;height:14.03px;line-height:14.23px;background:#FF6D1E;">29</div>
<div class="c r b" style="left:366.75px;top:53.79px;width:71.85px;height:14.03px;line-height:14.23px;">245</div>
<div class="c rn" style="left:0.00px;top:67.82px;width:12.00px;height:14.03px;line-height:14.23px;">5</div>
<div class="c m" style="left:12.00px;top:67.82px;width:47.40px;height:14.03px;line-height:14.23px;">31-40</div>
<div class="c w" style="left:59.40px;top:67.82px;width:46.60px;height:14.03px;line-height:14.23px;background:#0A9F52;">117</div>
<div class="c w" style="left:106.00px;top:67.82px;width:58.25px;height:14.03px;line-height:14.23px;background:#FFB600;">57</div>
<div class="c w" style="left:164.25px;top:67.82px;width:57.75px;height:14.03px;line-height:14.23px;background:#A5CE31;">87</div>
<div class="c w" style="left:222.00px;top:67.82px;width:46.50px;height:14.03px;line-height:14.23px;background:#FF9900;">49</div>
<div class="c w" style="left:268.50px;top:67.82px;width:47.00px;height:14.03px;line-height:14.23px;background:#FF6D1E;">11</div>
<div class="c w" style="left:315.50px;top:67.82px;width:51.25px;height:14.03px;line-height:14.23px;background:#FFB600;">51</div>
<div class="c r b" style="left:366.75px;top:67.82px;width:71.85px;height:14.03px;line-height:14.23px;">372</div>
<div class="c rn" style="left:0.00px;top:81.85px;width:12.00px;height:14.03px;line-height:14.23px;">6</div>
<div class="c m" style="left:12.00px;top:81.85px;width:47.40px;height:14.03px;line-height:14.23px;">41-50</div>
<div class="c w" style="left:59.40px;top:81.85px;width:46.60px;height:14.03px;line-height:14.23px;background:#0A9F52;">114</div>
<div class="c w" style="left:106.00px;top:81.85px;width:58.25px;height:14.03px;line-height:14.23px;background:#FFB600;">65</div>
<div class="c w" style="left:164.25px;top:81.85px;width:57.75px;height:14.03px;line-height:14.23px;background:#6ABD0A;">94</div>
<div class="c w" style="left:222.00px;top:81.85px;width:46.50px;height:14.03px;line-height:14.23px;background:#FF6D1E;">24</div>
<div class="c w" style="left:268.50px;top:81.85px;width:47.00px;height:14.03px;line-height:14.23px;background:#FF6D1E;">20</div>
<div class="c w" style="left:315.50px;top:81.85px;width:51.25px;height:14.03px;line-height:14.23px;background:#FFB600;">66</div>
<div class="c r b" style="left:366.75px;top:81.85px;width:71.85px;height:14.03px;line-height:14.23px;">383</div>
<div class="c rn" style="left:0.00px;top:95.88px;width:12.00px;height:14.03px;line-height:14.23px;">7</div>
<div class="c m" style="left:12.00px;top:95.88px;width:47.40px;height:14.03px;line-height:14.23px;">51-60</div>
<div class="c w" style="left:59.40px;top:95.88px;width:46.60px;height:14.03px;line-height:14.23px;background:#6ABD0A;">93</div>
<div class="c w" style="left:106.00px;top:95.88px;width:58.25px;height:14.03px;line-height:14.23px;background:#A5CE31;">75</div>
<div class="c w" style="left:164.25px;top:95.88px;width:57.75px;height:14.03px;line-height:14.23px;background:#6ABD0A;">104</div>
<div class="c w" style="left:222.00px;top:95.88px;width:46.50px;height:14.03px;line-height:14.23px;background:#FF9900;">30</div>
<div class="c w" style="left:268.50px;top:95.88px;width:47.00px;height:14.03px;line-height:14.23px;background:#FF6D1E;">11</div>
<div class="c w" style="left:315.50px;top:95.88px;width:51.25px;height:14.03px;line-height:14.23px;background:#FFB600;">68</div>
<div class="c r b" style="left:366.75px;top:95.88px;width:71.85px;height:14.03px;line-height:14.23px;">381</div>
<div class="c rn" style="left:0.00px;top:109.91px;width:12.00px;height:14.03px;line-height:14.23px;">8</div>
<div class="c m" style="left:12.00px;top:109.91px;width:47.40px;height:14.03px;line-height:14.23px;">61-70</div>
<div class="c w" style="left:59.40px;top:109.91px;width:46.60px;height:14.03px;line-height:14.23px;background:#FF9900;">40</div>
<div class="c w" style="left:106.00px;top:109.91px;width:58.25px;height:14.03px;line-height:14.23px;background:#FF9900;">40</div>
<div class="c w" style="left:164.25px;top:109.91px;width:57.75px;height:14.03px;line-height:14.23px;background:#FFB600;">63</div>
<div class="c w" style="left:222.00px;top:109.91px;width:46.50px;height:14.03px;line-height:14.23px;background:#FF6D1E;">13</div>
<div class="c w" style="left:268.50px;top:109.91px;width:47.00px;height:14.03px;line-height:14.23px;background:#FF6D1E;">18</div>
<div class="c w" style="left:315.50px;top:109.91px;width:51.25px;height:14.03px;line-height:14.23px;background:#FF9900;">42</div>
<div class="c r b" style="left:366.75px;top:109.91px;width:71.85px;height:14.03px;line-height:14.23px;">216</div>
<div class="c rn" style="left:0.00px;top:123.94px;width:12.00px;height:14.03px;line-height:14.23px;">9</div>
<div class="c m" style="left:12.00px;top:123.94px;width:47.40px;height:14.03px;line-height:14.23px;">71-80</div>
<div class="c w" style="left:59.40px;top:123.94px;width:46.60px;height:14.03px;line-height:14.23px;background:#FF6D1E;">27</div>
<div class="c w" style="left:106.00px;top:123.94px;width:58.25px;height:14.03px;line-height:14.23px;background:#FF6D1E;">18</div>
<div class="c w" style="left:164.25px;top:123.94px;width:57.75px;height:14.03px;line-height:14.23px;background:#FF9900;">44</div>
<div class="c w" style="left:222.00px;top:123.94px;width:46.50px;height:14.03px;line-height:14.23px;background:#FF6D1E;">14</div>
<div class="c w" style="left:268.50px;top:123.94px;width:47.00px;height:14.03px;line-height:14.23px;background:#FF6D1E;">16</div>
<div class="c w" style="left:315.50px;top:123.94px;width:51.25px;height:14.03px;line-height:14.23px;background:#FF6D1E;">26</div>
<div class="c r b" style="left:366.75px;top:123.94px;width:71.85px;height:14.03px;line-height:14.23px;">145</div>
<div class="c rn" style="left:0.00px;top:137.97px;width:12.00px;height:14.03px;line-height:14.23px;">10</div>
<div class="c m" style="left:12.00px;top:137.97px;width:47.40px;height:14.03px;line-height:14.23px;">81-90</div>
<div class="c w" style="left:59.40px;top:137.97px;width:46.60px;height:14.03px;line-height:14.23px;background:#DF3800;">7</div>
<div class="c w" style="left:106.00px;top:137.97px;width:58.25px;height:14.03px;line-height:14.23px;background:#DF3800;">4</div>
<div class="c w" style="left:164.25px;top:137.97px;width:57.75px;height:14.03px;line-height:14.23px;background:#DF3800;">8</div>
<div class="c w" style="left:222.00px;top:137.97px;width:46.50px;height:14.03px;line-height:14.23px;background:#DF3800;">2</div>
<div class="c w" style="left:268.50px;top:137.97px;width:47.00px;height:14.03px;line-height:14.23px;background:#FF6D1E;">18</div>
<div class="c w" style="left:315.50px;top:137.97px;width:51.25px;height:14.03px;line-height:14.23px;background:#FF6D1E;">12</div>
<div class="c r b" style="left:366.75px;top:137.97px;width:71.85px;height:14.03px;line-height:14.23px;">51</div>
<div class="c rn" style="left:0.00px;top:152.00px;width:12.00px;height:14.03px;line-height:14.23px;">11</div>
<div class="c m" style="left:12.00px;top:152.00px;width:47.40px;height:14.03px;line-height:14.23px;">91-100</div>
<div class="c w" style="left:59.40px;top:152.00px;width:46.60px;height:14.03px;line-height:14.23px;background:#DF3800;">0</div>
<div class="c w" style="left:106.00px;top:152.00px;width:58.25px;height:14.03px;line-height:14.23px;background:#DF3800;">1</div>
<div class="c w" style="left:164.25px;top:152.00px;width:57.75px;height:14.03px;line-height:14.23px;background:#DF3800;">2</div>
<div class="c w" style="left:222.00px;top:152.00px;width:46.50px;height:14.03px;line-height:14.23px;background:#DF3800;">0</div>
<div class="c w" style="left:268.50px;top:152.00px;width:47.00px;height:14.03px;line-height:14.23px;background:#DF3800;">2</div>
<div class="c w" style="left:315.50px;top:152.00px;width:51.25px;height:14.03px;line-height:14.23px;background:#DF3800;">1</div>
<div class="c r b" style="left:366.75px;top:152.00px;width:71.85px;height:14.03px;line-height:14.23px;">6</div>
<div class="c rn" style="left:0.00px;top:166.03px;width:12.00px;height:14.03px;line-height:14.23px;">12</div>
<div class="c m" style="left:12.00px;top:166.03px;width:47.40px;height:14.03px;line-height:14.23px;">Grand Total</div>
<div class="c r b" style="left:59.40px;top:166.03px;width:46.60px;height:14.03px;line-height:14.23px;">516</div>
<div class="c r b" style="left:106.00px;top:166.03px;width:58.25px;height:14.03px;line-height:14.23px;">290</div>
<div class="c r b" style="left:164.25px;top:166.03px;width:57.75px;height:14.03px;line-height:14.23px;">439</div>
<div class="c r b" style="left:222.00px;top:166.03px;width:46.50px;height:14.03px;line-height:14.23px;">171</div>
<div class="c r b" style="left:268.50px;top:166.03px;width:47.00px;height:14.03px;line-height:14.23px;">100</div>
<div class="c r b" style="left:315.50px;top:166.03px;width:51.25px;height:14.03px;line-height:14.23px;">298</div>
<div class="c r b" style="left:366.75px;top:166.03px;width:71.85px;height:14.03px;line-height:14.23px;">1 814</div>
<div class="c rn" style="left:0.00px;top:180.06px;width:12.00px;height:14.03px;line-height:14.23px;">13</div>
<div class="c " style="left:12.00px;top:180.06px;width:47.40px;height:14.03px;line-height:14.23px;"></div>
<div class="c " style="left:59.40px;top:180.06px;width:46.60px;height:14.03px;line-height:14.23px;"></div>
<div class="c " style="left:106.00px;top:180.06px;width:58.25px;height:14.03px;line-height:14.23px;"></div>
<div class="c " style="left:164.25px;top:180.06px;width:57.75px;height:14.03px;line-height:14.23px;"></div>
<div class="c " style="left:222.00px;top:180.06px;width:46.50px;height:14.03px;line-height:14.23px;"></div>
<div class="c " style="left:268.50px;top:180.06px;width:47.00px;height:14.03px;line-height:14.23px;"></div>
<div class="c " style="left:315.50px;top:180.06px;width:51.25px;height:14.03px;line-height:14.23px;"></div>
<div class="c " style="left:366.75px;top:180.06px;width:71.85px;height:14.03px;line-height:14.23px;"></div>
</div>
<div class="btn" style="left:741.25px;top:23.5px;"><svg width="20" height="20" viewBox="0 0 20 20"><path d="M13.400 6.600L6.300 14.100M6.300 7.900V14.100H12.500" fill="none" stroke="#a2a2a2" stroke-width="0.85"/></svg></div>
<svg class="abs" style="left:0;top:0" width="768" height="456" viewBox="0 0 768 456" font-family="Liberation Sans, sans-serif">
<path d="M436.00 244.0V402.0" stroke="#ebebeb" stroke-width="0.5"/>
<path d="M462.75 244.0V402.0" stroke="#ebebeb" stroke-width="0.5"/>
<path d="M489.50 244.0V402.0" stroke="#ebebeb" stroke-width="0.5"/>
<path d="M516.25 244.0V402.0" stroke="#ebebeb" stroke-width="0.5"/>
<path d="M543.00 244.0V402.0" stroke="#ebebeb" stroke-width="0.5"/>
<path d="M569.75 244.0V402.0" stroke="#ebebeb" stroke-width="0.5"/>
<path d="M596.50 244.0V402.0" stroke="#ebebeb" stroke-width="0.5"/>
<path d="M623.25 244.0V402.0" stroke="#ebebeb" stroke-width="0.5"/>
<path d="M650.00 244.0V402.0" stroke="#ebebeb" stroke-width="0.5"/>
<path d="M676.75 244.0V402.0" stroke="#ebebeb" stroke-width="0.5"/>
<path d="M703.50 244.0V402.0" stroke="#ebebeb" stroke-width="0.5"/>
<path d="M730.25 244.0V402.0" stroke="#ebebeb" stroke-width="0.5"/>
<path d="M757.00 244.0V402.0" stroke="#ebebeb" stroke-width="0.5"/>
<text x="402" y="253.90" font-size="5.8" fill="#444" text-anchor="end">Chihuahua</text>
<rect x="409.25" y="247.47" width="315.65" height="1.36" fill="#2caffe" fill-opacity="0.8"/>
<rect x="409.25" y="248.97" width="219.35" height="1.36" fill="#544fc5" fill-opacity="0.8"/>
<rect x="409.25" y="250.47" width="278.20" height="1.36" fill="#00e272" fill-opacity="0.8"/>
<rect x="409.25" y="251.97" width="321.00" height="1.36" fill="#fe6a35" fill-opacity="0.8"/>
<rect x="409.25" y="253.47" width="251.45" height="1.36" fill="#6b8abc" fill-opacity="0.8"/>
<rect x="409.25" y="254.97" width="165.85" height="1.36" fill="#d568fb" fill-opacity="0.8"/>
<text x="402" y="269.70" font-size="5.8" fill="#444" text-anchor="end">Französische Bulldogge</text>
<rect x="409.25" y="263.27" width="74.90" height="1.36" fill="#2caffe" fill-opacity="0.8"/>
<rect x="409.25" y="264.77" width="133.75" height="1.36" fill="#544fc5" fill-opacity="0.8"/>
<rect x="409.25" y="266.27" width="176.55" height="1.36" fill="#00e272" fill-opacity="0.8"/>
<rect x="409.25" y="267.77" width="149.80" height="1.36" fill="#fe6a35" fill-opacity="0.8"/>
<rect x="409.25" y="269.27" width="144.45" height="1.36" fill="#6b8abc" fill-opacity="0.8"/>
<rect x="409.25" y="270.77" width="181.90" height="1.36" fill="#d568fb" fill-opacity="0.8"/>
<text x="402" y="285.50" font-size="5.8" fill="#444" text-anchor="end">Golden Retriever</text>
<rect x="409.25" y="279.07" width="42.80" height="1.36" fill="#2caffe" fill-opacity="0.8"/>
<rect x="409.25" y="280.57" width="58.85" height="1.36" fill="#544fc5" fill-opacity="0.8"/>
<rect x="409.25" y="282.07" width="42.80" height="1.36" fill="#00e272" fill-opacity="0.8"/>
<rect x="409.25" y="283.57" width="74.90" height="1.36" fill="#fe6a35" fill-opacity="0.8"/>
<rect x="409.25" y="285.07" width="53.50" height="1.36" fill="#6b8abc" fill-opacity="0.8"/>
<rect x="409.25" y="286.57" width="53.50" height="1.36" fill="#d568fb" fill-opacity="0.8"/>
<text x="402" y="301.30" font-size="5.8" fill="#444" text-anchor="end">Jack Russel Terrier</text>
<rect x="409.25" y="294.87" width="133.75" height="1.36" fill="#2caffe" fill-opacity="0.8"/>
<rect x="409.25" y="296.37" width="117.70" height="1.36" fill="#544fc5" fill-opacity="0.8"/>
<rect x="409.25" y="297.87" width="90.95" height="1.36" fill="#00e272" fill-opacity="0.8"/>
<rect x="409.25" y="299.37" width="90.95" height="1.36" fill="#fe6a35" fill-opacity="0.8"/>
<rect x="409.25" y="300.87" width="90.95" height="1.36" fill="#6b8abc" fill-opacity="0.8"/>
<rect x="409.25" y="302.37" width="85.60" height="1.36" fill="#d568fb" fill-opacity="0.8"/>
<text x="402" y="317.10" font-size="5.8" fill="#444" text-anchor="end">Labrador Retriever</text>
<rect x="409.25" y="310.67" width="176.55" height="1.36" fill="#2caffe" fill-opacity="0.8"/>
<rect x="409.25" y="312.17" width="192.60" height="1.36" fill="#544fc5" fill-opacity="0.8"/>
<rect x="409.25" y="313.67" width="208.65" height="1.36" fill="#00e272" fill-opacity="0.8"/>
<rect x="409.25" y="315.17" width="171.20" height="1.36" fill="#fe6a35" fill-opacity="0.8"/>
<rect x="409.25" y="316.67" width="192.60" height="1.36" fill="#6b8abc" fill-opacity="0.8"/>
<rect x="409.25" y="318.17" width="171.20" height="1.36" fill="#d568fb" fill-opacity="0.8"/>
<text x="402" y="332.90" font-size="5.8" fill="#444" text-anchor="end">Malteser</text>
<rect x="409.25" y="326.47" width="74.90" height="1.36" fill="#2caffe" fill-opacity="0.8"/>
<rect x="409.25" y="327.97" width="48.15" height="1.36" fill="#544fc5" fill-opacity="0.8"/>
<rect x="409.25" y="329.47" width="96.30" height="1.36" fill="#00e272" fill-opacity="0.8"/>
<rect x="409.25" y="330.97" width="123.05" height="1.36" fill="#fe6a35" fill-opacity="0.8"/>
<rect x="409.25" y="332.47" width="171.20" height="1.36" fill="#6b8abc" fill-opacity="0.8"/>
<rect x="409.25" y="333.97" width="107.00" height="1.36" fill="#d568fb" fill-opacity="0.8"/>
<text x="402" y="348.70" font-size="5.8" fill="#444" text-anchor="end">Mischling gross</text>
<rect x="409.25" y="342.27" width="58.85" height="1.36" fill="#2caffe" fill-opacity="0.8"/>
<rect x="409.25" y="343.77" width="133.75" height="1.36" fill="#544fc5" fill-opacity="0.8"/>
<rect x="409.25" y="345.27" width="123.05" height="1.36" fill="#00e272" fill-opacity="0.8"/>
<rect x="409.25" y="346.77" width="128.40" height="1.36" fill="#fe6a35" fill-opacity="0.8"/>
<rect x="409.25" y="348.27" width="117.70" height="1.36" fill="#6b8abc" fill-opacity="0.8"/>
<rect x="409.25" y="349.77" width="133.75" height="1.36" fill="#d568fb" fill-opacity="0.8"/>
<text x="402" y="364.50" font-size="5.8" fill="#444" text-anchor="end">Mischling klein</text>
<rect x="409.25" y="358.07" width="294.25" height="1.36" fill="#2caffe" fill-opacity="0.8"/>
<rect x="409.25" y="359.57" width="155.15" height="1.36" fill="#544fc5" fill-opacity="0.8"/>
<rect x="409.25" y="361.07" width="251.45" height="1.36" fill="#00e272" fill-opacity="0.8"/>
<rect x="409.25" y="362.57" width="171.20" height="1.36" fill="#fe6a35" fill-opacity="0.8"/>
<rect x="409.25" y="364.07" width="214.00" height="1.36" fill="#6b8abc" fill-opacity="0.8"/>
<rect x="409.25" y="365.57" width="165.85" height="1.36" fill="#d568fb" fill-opacity="0.8"/>
<text x="402" y="380.30" font-size="5.8" fill="#444" text-anchor="end">Mops</text>
<rect x="409.25" y="373.87" width="123.05" height="1.36" fill="#2caffe" fill-opacity="0.8"/>
<rect x="409.25" y="375.37" width="117.70" height="1.36" fill="#544fc5" fill-opacity="0.8"/>
<rect x="409.25" y="376.87" width="74.90" height="1.36" fill="#00e272" fill-opacity="0.8"/>
<rect x="409.25" y="378.37" width="85.60" height="1.36" fill="#fe6a35" fill-opacity="0.8"/>
<rect x="409.25" y="379.87" width="80.25" height="1.36" fill="#6b8abc" fill-opacity="0.8"/>
<rect x="409.25" y="381.37" width="58.85" height="1.36" fill="#d568fb" fill-opacity="0.8"/>
<text x="402" y="396.10" font-size="5.8" fill="#444" text-anchor="end">Yorkshire Terrier</text>
<rect x="409.25" y="389.67" width="123.05" height="1.36" fill="#2caffe" fill-opacity="0.8"/>
<rect x="409.25" y="391.17" width="123.05" height="1.36" fill="#544fc5" fill-opacity="0.8"/>
<rect x="409.25" y="392.67" width="144.45" height="1.36" fill="#00e272" fill-opacity="0.8"/>
<rect x="409.25" y="394.17" width="149.80" height="1.36" fill="#fe6a35" fill-opacity="0.8"/>
<rect x="409.25" y="395.67" width="149.80" height="1.36" fill="#6b8abc" fill-opacity="0.8"/>
<rect x="409.25" y="397.17" width="85.60" height="1.36" fill="#d568fb" fill-opacity="0.8"/>
<path d="M409.25 244.0V402.0" stroke="#555" stroke-width="0.65"/>
<text x="409.25" y="415.1" font-size="5.8" fill="#333" text-anchor="middle">0</text>
<text x="436.00" y="415.1" font-size="5.8" fill="#333" text-anchor="middle">5</text>
<text x="462.75" y="415.1" font-size="5.8" fill="#333" text-anchor="middle">10</text>
<text x="489.50" y="415.1" font-size="5.8" fill="#333" text-anchor="middle">15</text>
<text x="516.25" y="415.1" font-size="5.8" fill="#333" text-anchor="middle">20</text>
<text x="543.00" y="415.1" font-size="5.8" fill="#333" text-anchor="middle">25</text>
<text x="569.75" y="415.1" font-size="5.8" fill="#333" text-anchor="middle">30</text>
<text x="596.50" y="415.1" font-size="5.8" fill="#333" text-anchor="middle">35</text>
<text x="623.25" y="415.1" font-size="5.8" fill="#333" text-anchor="middle">40</text>
<text x="650.00" y="415.1" font-size="5.8" fill="#333" text-anchor="middle">45</text>
<text x="676.75" y="415.1" font-size="5.8" fill="#333" text-anchor="middle">50</text>
<text x="703.50" y="415.1" font-size="5.8" fill="#333" text-anchor="middle">55</text>
<text x="730.25" y="415.1" font-size="5.8" fill="#333" text-anchor="middle">60</text>
<text x="757" y="415.1" font-size="5.8" fill="#333" text-anchor="end">65</text>
<text x="583.25" y="425.200" font-size="5.95" fill="#555" text-anchor="middle">Count of Owner ID</text>
<text transform="translate(335 323) rotate(-90)" font-size="5.5" fill="#555" text-anchor="middle">Breed 1</text>
<circle cx="454.75" cy="440.500" r="2.750" fill="#2caffe"/>
<text x="461.0" y="442.500" font-size="5.700" fill="#333">2010</text>
<circle cx="486.75" cy="440.500" r="2.750" fill="#544fc5"/>
<text x="493.0" y="442.500" font-size="5.700" fill="#333">2011</text>
<circle cx="518.75" cy="440.500" r="2.750" fill="#00e272"/>
<text x="525.0" y="442.500" font-size="5.700" fill="#333">2012</text>
<circle cx="550.75" cy="440.500" r="2.750" fill="#fe6a35"/>
<text x="557.0" y="442.500" font-size="5.700" fill="#333">2013</text>
<circle cx="582.75" cy="440.500" r="2.750" fill="#6b8abc"/>
<text x="589.0" y="442.500" font-size="5.700" fill="#333">2014</text>
<circle cx="614.75" cy="440.500" r="2.750" fill="#d568fb"/>
<text x="621.0" y="442.500" font-size="5.700" fill="#333">2015</text>
<text x="756.500" y="452" font-size="4.400" fill="#999" text-anchor="end">Highcharts.com</text>
</svg>
</body></html>
